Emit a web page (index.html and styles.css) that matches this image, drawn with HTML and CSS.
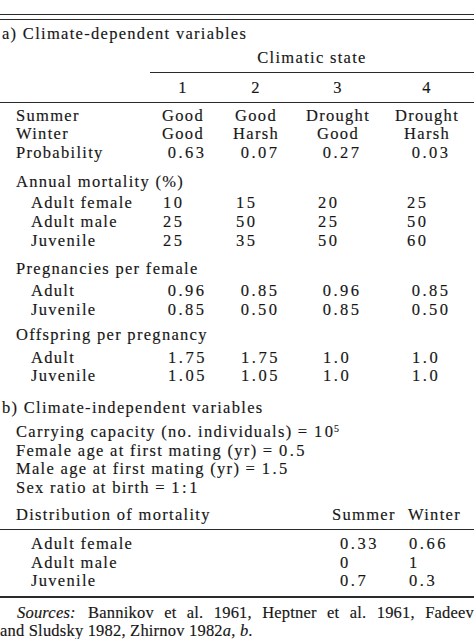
FILE: index.html
```html
<!DOCTYPE html>
<html>
<head>
<meta charset="utf-8">
<link rel="stylesheet" href="styles.css">
</head>
<body>
<div class="page">
  <div class="rule-double"></div>
  <div class="sec-title sec-a">a) Climate-dependent variables</div>

  <div class="row head-top">
    <div></div>
    <div class="span4">Climatic state</div>
  </div>
  <div class="row head-nums">
    <div></div><div class="c">1</div><div class="c">2</div><div class="c">3</div><div class="c">4</div>
  </div>

  <div class="row first">
    <div class="lbl">Summer</div><div class="c">Good</div><div class="c">Good</div><div class="c">Drought</div><div class="c">Drought</div>
  </div>
  <div class="row">
    <div class="lbl">Winter</div><div class="c">Good</div><div class="c">Harsh</div><div class="c">Good</div><div class="c">Harsh</div>
  </div>
  <div class="row">
    <div class="lbl">Probability</div>
    <div class="cell r"><span>0.63</span></div><div class="cell r"><span>0.07</span></div><div class="cell r"><span>0.27</span></div><div class="cell r"><span>0.03</span></div>
  </div>

  <div class="row grp grp-mort"><div class="lbl wide">Annual mortality (%)</div></div>
  <div class="row sub first-sub">
    <div class="lbl2">Adult female</div>
    <div class="cell l"><span>10</span></div><div class="cell l"><span>15</span></div><div class="cell l"><span>20</span></div><div class="cell l"><span>25</span></div>
  </div>
  <div class="row sub">
    <div class="lbl2">Adult male</div>
    <div class="cell l"><span>25</span></div><div class="cell l"><span>50</span></div><div class="cell l"><span>25</span></div><div class="cell l"><span>50</span></div>
  </div>
  <div class="row sub">
    <div class="lbl2">Juvenile</div>
    <div class="cell l"><span>25</span></div><div class="cell l"><span>35</span></div><div class="cell l"><span>50</span></div><div class="cell l"><span>60</span></div>
  </div>

  <div class="row grp grp-preg"><div class="lbl wide">Pregnancies per female</div></div>
  <div class="row first-preg">
    <div class="lbl2">Adult</div>
    <div class="cell r"><span>0.96</span></div><div class="cell r"><span>0.85</span></div><div class="cell r"><span>0.96</span></div><div class="cell r"><span>0.85</span></div>
  </div>
  <div class="row">
    <div class="lbl2">Juvenile</div>
    <div class="cell r"><span>0.85</span></div><div class="cell r"><span>0.50</span></div><div class="cell r"><span>0.85</span></div><div class="cell r"><span>0.50</span></div>
  </div>

  <div class="row grp grp-off"><div class="lbl wide">Offspring per pregnancy</div></div>
  <div class="row first-off">
    <div class="lbl2">Adult</div>
    <div class="cell o"><span>1.75</span></div><div class="cell o"><span>1.75</span></div><div class="cell o"><span>1.0</span></div><div class="cell o"><span>1.0</span></div>
  </div>
  <div class="row">
    <div class="lbl2">Juvenile</div>
    <div class="cell o"><span>1.05</span></div><div class="cell o"><span>1.05</span></div><div class="cell o"><span>1.0</span></div><div class="cell o"><span>1.0</span></div>
  </div>

  <div class="sec-title sec-b">b) Climate-independent variables</div>
  <div class="fact first-fact">Carrying capacity (no. individuals) = <span class="num">10<sup>5</sup></span></div>
  <div class="fact">Female age at first mating (yr) = <span class="num">0.5</span></div>
  <div class="fact">Male age at first mating (yr) = <span class="num">1.5</span></div>
  <div class="fact">Sex ratio at birth = <span class="num">1:1</span></div>

  <div class="drow dhead">
    <div class="lbl">Distribution of mortality</div><div>Summer</div><div>Winter</div>
  </div>
  <div class="drow dfirst">
    <div class="lbl2">Adult female</div><div class="dv1">0.33</div><div class="dv2">0.66</div>
  </div>
  <div class="drow">
    <div class="lbl2">Adult male</div><div class="dv1">0</div><div class="dv2">1</div>
  </div>
  <div class="drow dlast">
    <div class="lbl2">Juvenile</div><div class="dv1">0.7</div><div class="dv2">0.3</div>
  </div>

  <div class="sources">
    <span class="src-line1"><em class="src-label">Sources:</em> Bannikov et al. 1961, Heptner et al. 1961, Fadeev</span>
    <span class="src-line2">and Sludsky 1982, Zhirnov 1982<em>a</em>, <em>b</em>.</span>
  </div>
</div>
</body>
</html>
```

FILE: styles.css
```css
html, body {
  margin: 0;
  padding: 0;
  background: #ffffff;
}

body {
  font-family: "Liberation Serif", "Times New Roman", serif;
  font-size: 16.5px;
  line-height: 18.5px;
  letter-spacing: 1.3px;
  color: #161616;
  -webkit-text-stroke: 0.15px #161616;
}

.page {
  width: 474px;
}

.rule-double {
  margin-top: 14px;
  height: 3.5px;
  border-top: 1.5px solid #2a2a2a;
  border-bottom: 1.5px solid #2a2a2a;
}

.sec-title {
  padding-left: 2px;
  white-space: nowrap;
}

.sec-a { margin-top: 5.7px; }
.sec-b { margin-top: 13px; }

.row {
  display: grid;
  grid-template-columns: 150px 66px 80px 84px 94px;
  white-space: nowrap;
}

.span4 {
  grid-column: 2 / span 4;
  text-align: center;
  padding-bottom: 4.5px;
  border-bottom: 1px solid #2a2a2a;
}

.head-top { margin-top: 5.5px; }

.head-nums {
  margin-top: 6px;
  padding-bottom: 4px;
  border-bottom: 1.5px solid #2a2a2a;
}

.first { margin-top: 4px; }

.c { text-align: center; }

.lbl { padding-left: 16px; }
.lbl2 { padding-left: 31px; }
.wide { grid-column: 1 / span 5; }

.cell {
  display: flex;
  justify-content: center;
  letter-spacing: 2.5px;
}

.r > span {
  width: 40px;
  margin-left: 7px;
  text-align: right;
}

.l > span {
  width: 40px;
  text-align: left;
}

.o > span {
  width: 36px;
  margin-left: 6px;
  text-align: left;
}

.grp-mort { margin-top: 10.5px; }
.sub { line-height: 19px; }
.first-sub { margin-top: 1.5px; }

.grp-preg { margin-top: 10px; }
.first-preg { margin-top: 4px; }

.grp-off { margin-top: 6.5px; }
.first-off { margin-top: 4.5px; }

.fact {
  padding-left: 16px;
  white-space: nowrap;
}

.first-fact { margin-top: 6px; }

.num { letter-spacing: 2.5px; }

.num sup {
  font-size: 10px;
  line-height: 0;
  vertical-align: 5px;
  letter-spacing: 0;
  margin-left: -1.5px;
}

.drow {
  display: grid;
  grid-template-columns: 332px 76px 66px;
  white-space: nowrap;
}

.dhead {
  margin-top: 8.5px;
  padding-bottom: 5px;
  border-bottom: 1px solid #2a2a2a;
}

.dfirst { margin-top: 5px; }

.dlast {
  padding-bottom: 5.5px;
  border-bottom: 2px solid #2a2a2a;
}

.dv1 { padding-left: 8px; letter-spacing: 2.5px; }
.dv2 { padding-left: 1px; letter-spacing: 2.5px; }

.sources {
  margin-top: 5.5px;
  letter-spacing: 0.2px;
  line-height: 18.5px;
}

.src-line1 {
  display: block;
  padding-left: 17px;
  text-align: justify;
  text-align-last: justify;
}

.src-label { margin-right: 2px; }

.src-line2 {
  display: block;
  white-space: nowrap;
}
```
